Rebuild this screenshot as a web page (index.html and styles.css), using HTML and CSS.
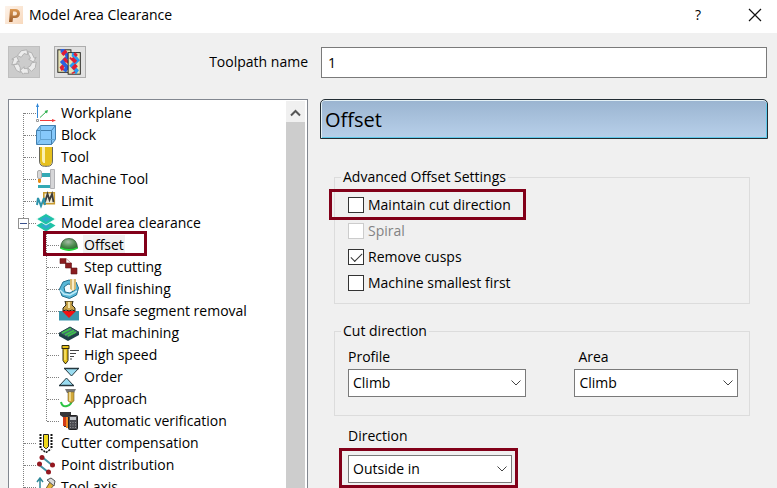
FILE: index.html
```html
<!DOCTYPE html>
<html lang="en">
<head>
    <meta charset="UTF-8">
    <title>Model Area Clearance</title>
    <link rel="stylesheet" href="styles.css">
</head>
<body>
<div class="dialog">
    <header class="titlebar">
        <svg class="logo" viewBox="0 0 18 18">
            <defs>
                <linearGradient id="logoBg" x1="0" y1="0" x2="1" y2="1"><stop offset="0" stop-color="#fdf3ea"/><stop offset="1" stop-color="#f8d9bd"/></linearGradient>
                <linearGradient id="logoP" x1="0" y1="0" x2="0" y2="1"><stop offset="0" stop-color="#dc9a55"/><stop offset="1" stop-color="#9a5a28"/></linearGradient>
            </defs>
            <rect width="18" height="18" fill="url(#logoBg)"/>
            <path d="M4 16l1-13h5.500a4 4 0 0 1 0 9H8l-.5 4z" fill="url(#logoP)"/>
            <path d="M8 5.500h2a2 2 0 0 1 0 4H7.800z" fill="#fbe8d6"/>
        </svg>
        <h1>Model Area Clearance</h1>
        <button class="caption" type="button" aria-label="Help">?</button>
        <button class="caption" type="button" aria-label="Close">
            <svg width="14" height="14" viewBox="0 0 14 14"><path d="M1 1l12 12M13 1L1 13" stroke="#111" stroke-width="1.200"/></svg>
        </button>
    </header>

    <div class="top">
        <div class="tools">
            <button class="tool off" type="button" disabled aria-label="Recycle">
                <svg viewBox="0 0 32 32" fill="#ececec" stroke="#a6a6a6" stroke-width=".8">
                    <path d="M9 9l4-5 6-1 1 5-4-1-3 4z"/>
                    <path d="M20 5l4 1 3 6 2-1-3 5-5-3 2-1-2-4z"/>
                    <path d="M24 17l5-1-1 6-4 4-4-4 3-2z"/>
                    <path d="M20 23l1 5h-5l-1 1-3-4 4-4v2z"/>
                    <path d="M5 19l5-1 2 4v5l-4-2z"/>
                    <path d="M3 13l5-3 3 6-2-1-1 3-5 1 2-6z"/>
                </svg>
            </button>
            <button class="tool" type="button" aria-label="Copy toolpath">
                <svg viewBox="0 0 32 32">
                    <rect x="3" y="3" width="14" height="24" fill="#e6e2b4" stroke="#222"/>
                    <path d="M6 4h3l5 6-6 6 5 6-3 4" fill="none" stroke="#2b62e0" stroke-width="4"/>
                    <path d="M12 4L7 9l6 7-6 6 2 4" fill="none" stroke="#e01c36" stroke-width="3.500" stroke-dasharray="6 5"/>
                    <rect x="14" y="6" width="13" height="23" fill="#e6e2b4" stroke="#222"/>
                    <path d="M18 8h1l5 6-6 6 5 5-2 3" fill="none" stroke="#259cf4" stroke-width="4"/>
                    <path d="M23 7l-5 5 6 6-6 6 2 4" fill="none" stroke="#e01c36" stroke-width="4" stroke-dasharray="6 4" stroke-dashoffset="3"/>
                </svg>
            </button>
            <label for="name">Toolpath name</label>
        </div>
        <input class="name" id="name" type="text" value="1">
    </div>

    <main class="main">
        <nav class="tree">
            <ul class="root">
                <li class="row">
                    <svg class="icon" viewBox="0 0 20 20" fill="none">
                        <path d="M1.500 15V1" stroke="#2f86d6"/><path d="M0 4l1.500-4L3 4z" fill="#2f86d6"/>
                        <path d="M4 17.500h13" stroke="#f03c3c"/><path d="M16 16l4 1.500-4 1.500z" fill="#f03c3c"/>
                        <path d="M4 14.500l7-6.500" stroke="#2cb04c"/><path d="M8.500 8l3.500-1-1 3.500z" fill="#2cb04c"/>
                        <path d="M.5 16.500h2v2h-2z" stroke="#999"/>
                    </svg>
                    <span>Workplane</span>
                </li>
                <li class="row">
                    <svg class="icon" viewBox="0 0 20 20" fill="#86c8fa" stroke="#437fae">
                        <path d="M.5 5.500l4-5h15v14l-4 5H.5z"/>
                        <path d="M.5 5.500h15v14M15.500 5.500l4-5" fill="none"/>
                        <path d="M4.500.5v14h15M4.500 14.500l-4 5" fill="none" stroke="#62a3d2"/>
                    </svg>
                    <span>Block</span>
                </li>
                <li class="row">
                    <svg class="icon" viewBox="0 0 20 20">
                        <path d="M4 0h12v14q0 5-5 5H9q-5 0-5-5z" fill="#e6c01e"/>
                        <path d="M6 0h3v16H7.500Q6 15 6 13z" fill="#fbf1b2"/>
                        <path d="M3.500 0v14q0 5.300 5 5.300h3q5 0 5-5.300V0" fill="none" stroke="#66665c"/>
                    </svg>
                    <span>Tool</span>
                </li>
                <li class="row">
                    <svg class="icon" viewBox="0 0 20 20">
                        <path d="M5 4h10v4H5zM2 16h13v3H2z" fill="#35aab4"/>
                        <path d="M14.500.5h4v19h-4z" fill="#d6d6d8" stroke="#b2b2b6"/>
                        <rect x="1.500" y="1.500" width="4" height="8" rx="1.500" fill="#d8d8d8" stroke="#aaa"/>
                        <path d="M2 10h3v3l-1 1H3l-1-1z" fill="#e58b12"/>
                    </svg>
                    <span>Machine Tool</span>
                </li>
                <li class="row">
                    <svg class="icon" viewBox="0 0 20 20" fill="none">
                        <path d="M7.800 1.800h10.500v11H7.800z" fill="#f0ead2" stroke="#c89a30" stroke-width="1.600"/>
                        <path d="M9 11l2.500-8 2 6L16 3l1.500 8" stroke="#3c3c3c" stroke-width="1.800"/>
                        <path d="M1 14l1-7 3 8 3-8 1 7" stroke="#2d93aa" stroke-width="2"/>
                    </svg>
                    <span>Limit</span>
                </li>
                <li>
                    <div class="row parent">
                        <button class="toggle" type="button" aria-label="Collapse"></button>
                        <svg class="icon" viewBox="0 0 20 20" fill="#1fc3a6">
                            <path d="M10 7l9.500 5.500L10 18.500.5 12.500z"/>
                            <path d="M10 10l5 3-5 3-5-3z" fill="#2fa9cc"/>
                            <path d="M10 .5L19.500 6 10 12 .5 6z" stroke="#fff" stroke-width=".8"/>
                            <path d="M10 3.500l5 2.500-5 3-5-3z" fill="#2fa9cc"/>
                        </svg>
                        <span>Model area clearance</span>
                    </div>
                    <ul class="sub">
                        <li class="row marked">
                            <svg class="icon" viewBox="0 0 20 20">
                                <defs><radialGradient id="dome" cx=".45" cy=".3" r=".7"><stop offset="0" stop-color="#a6bba6"/><stop offset=".6" stop-color="#4c8c4e"/><stop offset="1" stop-color="#2f6a34"/></radialGradient></defs>
                                <path d="M1.500 13Q2 3.500 10 3.500T18.500 13q-8.500 4-17 0z" fill="url(#dome)" stroke="#3b5b3d" stroke-width=".8"/>
                                <path d="M1.500 13q8.500 4 17 0" fill="none" stroke="#22d83a" stroke-width="1.800"/>
                            </svg>
                            <span class="current">Offset</span>
                        </li>
                        <li class="row">
                            <svg class="icon" viewBox="0 0 20 20" fill="#8b1d20" stroke="#5e1518" stroke-width=".6">
                                <path d="M1 1.500h6v5H1z"/><path d="M6.500 6h6v5h-6z"/><path d="M12 11h6v6h-6z"/>
                                <path d="M1 1.500h6l5 4.500" fill="none" stroke="#b4595c"/>
                            </svg>
                            <span>Step cutting</span>
                        </li>
                        <li class="row">
                            <svg class="icon" viewBox="0 0 20 20">
                                <path d="M.5 10L4 3l6-2 7 2 2.500 6-2 7-7 3.500L3 17z" fill="#58b8d8" stroke="#236d8b"/>
                                <path d="M5 8l4-3 6 1 1 5-5 3-5-1z" fill="#f4fbff" stroke="#236d8b"/>
                                <path d="M1 11l4 4 6 1 7-4" fill="none" stroke="#c0ebf8" stroke-width="1.500"/>
                                <path d="M11 0h6v10l-3 2-3-2z" fill="#d8ba72"/><path d="M13 0h2v11h-2z" fill="#f8ecc8"/>
                            </svg>
                            <span>Wall finishing</span>
                        </li>
                        <li class="row">
                            <svg class="icon" viewBox="0 0 20 20">
                                <path d="M0 10h20v9.500H0z" fill="#3995ac"/>
                                <path d="M3 10h14l-7 7z" fill="#f21212"/>
                                <path d="M6 0h8l-1 4 3 3v3l-3-1-3 1-3-1-3 1V7l3-3z" fill="#c9a44b" stroke="#262214"/>
                                <path d="M9 1h2v6H9z" fill="#f5e4a6"/>
                            </svg>
                            <span>Unsafe segment removal</span>
                        </li>
                        <li class="row">
                            <svg class="icon" viewBox="0 0 20 20">
                                <path d="M0 10l11-6 9 5v3L9 18 0 13z" fill="#1f4049"/>
                                <path d="M.5 10L11 4l8.500 5L9 14.500z" fill="#456c72" stroke="#29474e"/>
                                <path d="M3 10l9-4.500M6 12l9-4.500M9 13l8-4" stroke="#3fc34b" stroke-width="1.400"/>
                            </svg>
                            <span>Flat machining</span>
                        </li>
                        <li class="row">
                            <svg class="icon" viewBox="0 0 20 20">
                                <path d="M3 .5h7v3l-1 1v11l-2 3h-1l-2-3v-11l-1-1z" fill="#e8c31c" stroke="#302a10"/>
                                <path d="M3 3.500h7" stroke="#302a10"/><path d="M6 5v10" stroke="#fff3a0"/>
                                <path d="M11 5.500h9M11 8.500h6M11 11.500h4M11 14h2" stroke="#444"/>
                            </svg>
                            <span>High speed</span>
                        </li>
                        <li class="row">
                            <svg class="icon" viewBox="0 0 20 20" fill="#9adcf0" stroke="#263840">
                                <path d="M5.500 1.500h14L12.500 9z"/><path d="M.5 18.500h14L7.500 11z"/>
                                <path d="M5 1.500h15M0 18.500h15" stroke-width="1.500"/>
                            </svg>
                            <span>Order</span>
                        </li>
                        <li class="row">
                            <svg class="icon" viewBox="0 0 20 20">
                                <path d="M2 13q1 5 6 4 5-1 5-7" fill="none" stroke="#2cc444" stroke-width="2"/>
                                <path d="M6 0h11l-2 4H8z" fill="#777"/>
                                <path d="M9 3h6v9l-3 2-3-2z" fill="#d2a83a" stroke="#776231" stroke-width=".6"/><path d="M11 3v9" stroke="#f9e7a4" stroke-width="1.500"/>
                            </svg>
                            <span>Approach</span>
                        </li>
                        <li class="row">
                            <svg class="icon" viewBox="0 0 20 20">
                                <path d="M1 1h11v4H9v11H5V7L1 4z" fill="#363638"/><path d="M4 6h3v9H4z" fill="#d23b18"/>
                                <path d="M7 6h4v11H7z" fill="#f28d24"/>
                                <rect x="9.500" y="4.500" width="9" height="14" rx="1" fill="#4b4b50" stroke="#222"/>
                                <path d="M11 6h6v3h-6z" fill="#c2c6cb"/><path d="M11 11.500h6M11 14h6M11 16.500h6" stroke="#999" stroke-dasharray="1 1.500"/>
                            </svg>
                            <span>Automatic verification</span>
                        </li>
                    </ul>
                </li>
                <li class="row">
                    <svg class="icon" viewBox="0 0 20 20" fill="none">
                        <path d="M4.500 1v15M15.500 1v15" stroke="#111" stroke-width="2" stroke-dasharray="2 1"/>
                        <path d="M5 16l5 3.500 5-3.500" stroke="#111" stroke-width="1.500" stroke-dasharray="2 1"/>
                        <path d="M7.500 1.500h5v12l-2 2h-1l-2-2z" fill="#f0d91c" stroke="#222"/>
                    </svg>
                    <span>Cutter compensation</span>
                </li>
                <li class="row">
                    <svg class="icon" viewBox="0 0 20 20">
                        <path d="M6 2l10 8M2 9l10 8" stroke="#4092a4" stroke-width="2"/>
                        <g fill="#941820"><circle cx="6" cy="2.500" r="2.500"/><circle cx="16.500" cy="10" r="2.500"/><circle cx="3.500" cy="9" r="2.500"/><circle cx="12.500" cy="17" r="2.500"/></g>
                    </svg>
                    <span>Point distribution</span>
                </li>
                <li class="row">
                    <svg class="icon" viewBox="0 0 20 20">
                        <path d="M4 20V2M1 5l3-4 3 4" fill="none" stroke="#2e8798" stroke-width="1.500"/>
                        <path d="M6 18L14 5l4 3L8 20z" fill="#e4b338" stroke="#514321" stroke-width=".8"/>
                        <path d="M11 3l4-2 4 3-1 5z" fill="#dadada" stroke="#555"/>
                    </svg>
                    <span>Tool axis</span>
                </li>
            </ul>
            <div class="scrollbar">
                <button type="button" aria-label="Scroll up">
                    <svg width="11" height="8" viewBox="0 0 11 8"><path d="M1 6.500L5.500 2 10 6.500" fill="none" stroke="#555" stroke-width="2"/></svg>
                </button>
                <div class="thumb"></div>
            </div>
        </nav>

        <section class="page">
            <h2>Offset</h2>
            <div class="fields">
                <fieldset>
                    <legend>Advanced Offset Settings</legend>
                    <label class="check framed"><input type="checkbox">Maintain cut direction</label>
                    <label class="check disabled"><input type="checkbox" disabled>Spiral</label>
                    <label class="check"><input type="checkbox" checked>Remove cusps</label>
                    <label class="check"><input type="checkbox">Machine smallest first</label>
                </fieldset>
                <fieldset class="cut">
                    <legend>Cut direction</legend>
                    <div class="field">
                        <label for="profile">Profile</label>
                        <div class="select">
                            <select id="profile"><option>Climb</option></select>
                            <svg width="10" height="6" viewBox="0 0 10 6"><path d="M.5.5L5 5 9.500.5" fill="none" stroke="#444"/></svg>
                        </div>
                    </div>
                    <div class="field area">
                        <label for="area">Area</label>
                        <div class="select">
                            <select id="area"><option>Climb</option></select>
                            <svg width="10" height="6" viewBox="0 0 10 6"><path d="M.5.5L5 5 9.500.5" fill="none" stroke="#444"/></svg>
                        </div>
                    </div>
                </fieldset>
                <div class="field direction">
                    <label for="direction">Direction</label>
                    <div class="select framed">
                        <select id="direction"><option>Outside in</option></select>
                        <svg width="10" height="6" viewBox="0 0 10 6"><path d="M.5.5L5 5 9.500.5" fill="none" stroke="#444"/></svg>
                    </div>
                </div>
            </div>
        </section>
    </main>
</div>
</body>
</html>
```
FILE: styles.css
```css
*,:before,:after{margin:0;padding:0;box-sizing:border-box;}
body,button,input,select{
    font-family:"Open Sans","Noto Sans",sans-serif;
    font-size:14px;
    line-height:20px;
    color:#000;
}
body{
    background:#f0f0f0;
}
ul{list-style:none;}
button{
    border:none;
    background:none;
}
.dialog{
    display:flex;
    flex-direction:column;
    height:100vh;
    overflow:hidden;
}

/* title bar */
.titlebar{
    display:flex;
    align-items:center;
    height:33px;
    padding:0 0 4px 5px;
    background:#fff;
}
.titlebar h1{
    flex:1;
    margin-left:6px;
    font-size:14px;
    font-weight:400;
}
.logo{
    width:18px;
    height:18px;
}
.caption{
    display:flex;
    align-items:center;
    justify-content:center;
    width:58px;
    height:28px;
}
.caption:last-child{
    width:44px;
    margin-left:6px;
}

/* toolbar and name */
.top,
.main{
    display:grid;
    grid-template-columns:300px 1fr;
    gap:12px;
    padding:0 9px 0 8px;
}
.top{
    align-items:center;
    padding-top:13px;
    padding-bottom:21px;
}
.tools{
    display:flex;
    align-items:center;
    gap:14px;
}
.tools label{
    margin-left:auto;
}
.tool{
    width:32px;
    height:32px;
    border:1px solid #adadad;
    background:#e1e1e1;
}
.tool.off{
    border-color:#bfbfbf;
    background:#ccc;
}
.tool svg{
    display:block;
    width:30px;
    height:30px;
}
.name{
    height:31px;
    margin:0 1px;
    padding:0 6px;
    border:1px solid #7a7a7a;
    background:#fff;
}

/* tree */
.main{
    flex:1;
    min-height:0;
}
.tree{
    display:flex;
    min-height:0;
    padding:1px 2px 0 0;
    border:1px solid #828790;
    border-bottom:none;
    background:#fff;
    overflow:hidden;
}
.root{
    flex:1;
    padding-top:1px;
    background:repeating-linear-gradient(#808080 0 1px,transparent 1px 2px) 14px 12px / 1px 100% no-repeat;
}
.row{
    display:flex;
    align-items:center;
    height:22px;
    padding-left:15px;
    white-space:nowrap;
}
.row:before{
    content:"";
    flex:none;
    width:12px;
    border-top:1px dotted #808080;
}
.parent{
    padding-left:9px;
}
.parent:before{
    order:1;
    width:7px;
}
.parent .icon,
.parent span{
    order:2;
}
.toggle{
    width:11px;
    height:11px;
    border:1px solid #919191;
    background:linear-gradient(#39508c,#39508c) center / 7px 1px no-repeat #fff;
}
.icon{
    flex:none;
    width:20px;
    height:20px;
}
.row span{
    margin-left:4px;
    padding:0 1px;
}
.sub{
    background:repeating-linear-gradient(#808080 0 1px,transparent 1px 2px) 37px 0 / 1px calc(100% - 11px) no-repeat;
}
.sub .row{
    padding-left:38px;
}
.row .current{
    background:#f0f0f0;
}
.scrollbar{
    display:flex;
    flex-direction:column;
    width:19px;
    background:#f0f0f0;
}
.scrollbar button{
    height:21px;
}
.thumb{
    flex:1;
    background:#cdcdcd;
}

/* red frames drawn over the controls */
.marked,
.framed{
    position:relative;
}
.marked:after,
.framed:after{
    content:"";
    position:absolute;
    border:3px solid #820019;
    pointer-events:none;
}
.marked:after{
    left:34px;
    top:-3px;
    width:104px;
    height:25px;
}
.check.framed:after{
    left:-19px;
    top:-3px;
    width:197px;
    height:31px;
}
.select.framed:after{
    inset:-7px -6px -5px -9px;
}

/* settings page */
.page h2{
    height:40px;
    padding-left:4px;
    border:1px solid #222c33;
    border-radius:5px 5px 0 0;
    background:linear-gradient(#9ab4d0,#b8d0ea);
    box-shadow:inset 0 1px #e4f1f6,inset 1px 0 #e4f1f6,inset -1px -1px #5fc9ea;
    font-size:20px;
    font-weight:400;
    line-height:40px;
}
.fields{
    padding:28px 18px 0 14px;
}
fieldset{
    padding:5px 11px 7px 13px;
    border:1px solid #dcdcdc;
}
legend{
    margin-left:-7px;
    padding:0 2px;
}
.check{
    display:flex;
    align-items:center;
    height:26px;
}
.check input{
    appearance:none;
    width:16px;
    height:16px;
    margin-right:4px;
    border:1px solid #333;
    background:#fff;
}
.check input:checked:before{
    content:"";
    display:block;
    width:11px;
    height:6px;
    margin:3px 2px;
    border:solid #333;
    border-width:0 0 1px 1px;
    transform:rotate(-45deg);
}
.check input:disabled{
    border-color:#ccc;
}
.disabled{
    color:#838383;
}
.cut{
    display:grid;
    grid-template-columns:12fr 11fr;
    gap:48px;
    margin-top:17px;
    padding-top:6px;
    padding-bottom:18px;
}
.field{
    display:grid;
    gap:2px;
}
.area label{
    padding-left:4px;
}
.direction{
    width:164px;
    margin:10px 0 0 14px;
    gap:9px;
}
.select{
    display:grid;
    align-items:center;
}
.select select,
.select svg{
    grid-area:1 / 1;
}
.select select{
    appearance:none;
    width:100%;
    height:28px;
    padding:0 4px;
    border:1px solid #7a7a7a;
    border-radius:0;
    background:#fff;
}
.select svg{
    justify-self:end;
    margin-right:5px;
    pointer-events:none;
}
```
